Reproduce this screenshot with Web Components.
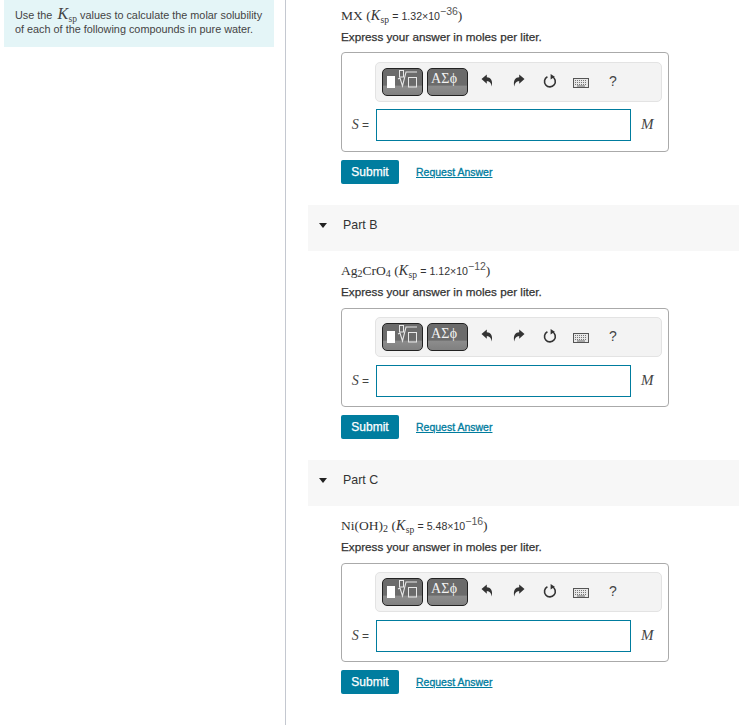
<!DOCTYPE html>
<html>
<head>
<meta charset="utf-8">
<style>
  html, body { margin: 0; padding: 0; background: #fff; }
  body { font-family: "Liberation Sans", Arial, sans-serif; color: #333; }
</style>
</head>
<body>
<template id="ksp-tpl"><style>
    :host { display: inline; font-family: "Liberation Serif", serif; }
    i { font-size: var(--k-size, 16px); line-height: 0; margin-left: var(--k-gap, 0); }
    sub { font: 9.5px/0 "Liberation Serif", serif; vertical-align: -3px; margin-left: 0.5px; }
  </style><i>K</i><sub>sp</sub></template>

<quiz-page>
  <intro-panel slot="side">
    Use the <k-sp style="--k-gap: 2px"></k-sp> values to calculate the molar solubility<br>of each of the following compounds in pure water.
  </intro-panel>

  <quiz-part formula="MX" ksp="1.32" exp="36"></quiz-part>
  <quiz-part title="Part B" formula="Ag<sub>2</sub>CrO<sub>4</sub>" ksp="1.12" exp="12"></quiz-part>
  <quiz-part title="Part C" formula="Ni(OH)<sub>2</sub>" ksp="5.48" exp="16"></quiz-part>
</quiz-page>

<script>
class KSp extends HTMLElement {
  constructor() {
    super();
    this.attachShadow({ mode: "open" });
    this.shadowRoot.appendChild(document.getElementById("ksp-tpl").content.cloneNode(true));
  }
}

class QuizPage extends HTMLElement {
  constructor() {
    super();
    this.attachShadow({ mode: "open" });
    this.shadowRoot.innerHTML = `
      <style>
        :host { display: grid; grid-template-columns: 286px 1fr; height: 725px; overflow: hidden; }
        .side { border-right: 1px solid #c4c8d0; padding-left: 4px; padding-right: 11px; }
        .main { padding-left: 22px; }
      </style>
      <div class="side"><slot name="side"></slot></div>
      <div class="main"><slot></slot></div>
    `;
  }
}

class IntroPanel extends HTMLElement {
  constructor() {
    super();
    this.attachShadow({ mode: "open" });
    this.shadowRoot.innerHTML = `
      <style>
        :host {
          display: block;
          background: #e4f5f7;
          height: 47px;
          box-sizing: border-box;
          padding: 8px 5px 0 11px;
          font: 10.85px/14px "Liberation Sans", Arial, sans-serif;
          color: #444;
        }
      </style>
      <slot></slot>
    `;
  }
}

class MathToolbar extends HTMLElement {
  constructor() {
    super();
    this.attachShadow({ mode: "open" });
    this.shadowRoot.innerHTML = `
      <style>
        :host {
          display: flex;
          align-items: center;
          box-sizing: border-box;
          width: 287px;
          height: 40px;
          margin-left: 33px;
          padding-left: 6px;
          background: #f3f3f3;
          border: 1px solid #e3e3e3;
          border-radius: 5px;
        }
        .tpl {
          box-sizing: border-box;
          width: 41px;
          height: 28px;
          margin-right: 4px;
          border: 1px solid #222;
          border-radius: 5px;
          background: linear-gradient(#6b6b6b 0, #6b6b6b 62%, #8c8c8c 66%, #808080 100%);
          color: #fff;
          display: flex;
          align-items: center;
        }
        .greek { font: 14px/1 "Liberation Serif", serif; letter-spacing: 0.2px; padding: 0 0 7px 3px; color: #f2f2f2; }
        .icons { display: flex; align-items: center; padding-bottom: 3px; }
        .icons span { display: flex; justify-content: center; align-items: center; height: 20px; }
        .q { font: 14px/1 "Liberation Sans", Arial, sans-serif; color: #444; }
      </style>
      <div class="tpl">
        <svg width="39" height="26" viewBox="0 0 39 26">
          <rect x="4" y="7" width="8" height="12" fill="#fff"/>
          <rect x="16.5" y="1.5" width="4" height="6.5" fill="none" stroke="#e8e8e8"/>
          <path d="M15 10l2 -1 2.5 8 3.5 -14h11" fill="none" stroke="#e8e8e8" stroke-width="1.1"/>
          <rect x="25.5" y="8.5" width="8" height="9.5" fill="none" stroke="#e8e8e8"/>
        </svg>
      </div>
      <div class="tpl greek">ΑΣϕ</div>
      <div class="icons">
        <span style="width:12px;margin-left:9px">
          <svg width="12" height="13" viewBox="0 0 12 13"><path d="M0.5 5L5.8 0.5V3.3C9.4 3.3 12 6 10.8 12.5C10 9 8.7 7.2 5.8 7.1V9.8Z" fill="#333"/></svg>
        </span>
        <span style="width:12px;margin-left:20px">
          <svg width="12" height="13" viewBox="0 0 12 13"><path d="M11.5 5L6.2 0.5V3.3C2.6 3.3 0 6 1.2 12.5C2 9 3.3 7.2 6.2 7.1V9.8Z" fill="#333"/></svg>
        </span>
        <span style="width:14px;margin-left:18px">
          <svg width="14" height="14" viewBox="0 0 14 14"><path d="M9.2 2.6A5.4 5.4 0 1 1 4.4 2.7" fill="none" stroke="#333" stroke-width="1.6"/><path d="M7.6 0L7.6 5.6L11.8 2.8Z" fill="#333"/></svg>
        </span>
        <span style="width:16px;margin-left:16px;padding-top:5px">
          <svg width="16" height="10" viewBox="0 0 16 10">
            <rect x="0.5" y="0.5" width="15" height="9" fill="#e8e8e8" stroke="#555"/>
            <path d="M2 2.5h12M2 4.5h12" stroke="#777" stroke-dasharray="1 1"/>
            <path d="M2 6.5h12" stroke="#777" stroke-dasharray="1 1"/>
            <path d="M4 8h8" stroke="#666"/>
          </svg>
        </span>
        <span class="q" style="width:10px;margin-left:19px">?</span>
      </div>
    `;
  }
}

class AnswerBox extends HTMLElement {
  constructor() {
    super();
    this.attachShadow({ mode: "open" });
    this.shadowRoot.innerHTML = `
      <style>
        :host {
          display: block;
          box-sizing: border-box;
          width: 328px;
          height: 100px;
          padding-top: 9px;
          border: 1px solid #aaa;
          border-radius: 4px;
          background: #fff;
          --gap: 7px;
        }
        :host([compact]) { height: 99px; padding-top: 8px; --gap: 8px; }
        .row { display: flex; align-items: center; margin-top: var(--gap); }
        .s { width: 34px; text-align: right; font: 12px "Liberation Sans", Arial, sans-serif; color: #444; white-space: nowrap; box-sizing: border-box; padding-right: 7px; }
        .s i { font: italic 14px "Liberation Serif", serif; }
        .field { box-sizing: border-box; width: 255px; height: 32px; border: 1.5px solid #007c9e; background: #fff; }
        .unit { margin-left: 10px; padding-bottom: 2px; font: italic 15px "Liberation Serif", serif; color: #444; }
      </style>
      <math-toolbar></math-toolbar>
      <div class="row">
        <span class="s"><i>S</i> =</span>
        <div class="field"></div>
        <span class="unit">M</span>
      </div>
    `;
  }
}

class QuizPart extends HTMLElement {
  constructor() {
    super();
    this.attachShadow({ mode: "open" });
  }

  connectedCallback() {
    const title = this.getAttribute("title");
    const formula = this.getAttribute("formula");
    const ksp = this.getAttribute("ksp");
    const exp = this.getAttribute("exp");
    this.shadowRoot.innerHTML = `
      <style>
        :host { display: block; }
        .head {
          display: flex;
          align-items: center;
          box-sizing: border-box;
          height: 46px;
          padding-bottom: 6px;
          background: #f7f7f7;
          font: 12.4px "Liberation Sans", Arial, sans-serif;
          color: #333;
        }
        .arrow { width: 0; height: 0; margin: 0 16px 0 11px; border: 4.5px solid transparent; border-top: 5px solid #222; border-bottom: 0; }
        .body { padding: 8px 0 21px 33px; }
        :host([title]) .body { padding-top: 12px; }
        .formula { height: 15px; font: 13.5px/15px "Liberation Serif", serif; color: #333; white-space: nowrap; }
        .formula sub { font-size: 10px; line-height: 0; vertical-align: -2px; }
        .num { font: 10.6px "Liberation Sans", Arial, sans-serif; }
        .num sup { font-size: 10.5px; line-height: 0; vertical-align: 5px; color: #555; }
        .hint { margin: 7px 0 8px; font: 11.7px/14px "Liberation Sans", Arial, sans-serif; -webkit-text-stroke: 0.25px #333; color: #333; }
        :host([title]) .hint { margin-bottom: 9px; }
        .actions { display: flex; align-items: center; margin-top: 8px; }
        .submit { box-sizing: border-box; width: 58px; height: 24px; background: #007d9f; color: #fff; border-radius: 2px; text-align: center; font: 12px/24px "Liberation Sans", Arial, sans-serif; -webkit-text-stroke: 0.25px #fff; }
        .req { margin-left: 17px; color: #007c9e; font: 10.5px "Liberation Sans", Arial, sans-serif; -webkit-text-stroke: 0.3px #007c9e; text-decoration: underline; }
        k-sp { --k-size: 14px; }
      </style>
      ${title ? `<div class="head"><span class="arrow"></span>${title}</div>` : ""}
      <div class="body">
        <div class="formula">${formula} (<k-sp></k-sp> <span class="num">= ${ksp}×10<sup>−${exp}</sup></span>)</div>
        <div class="hint">Express your answer in moles per liter.</div>
        <answer-box ${title ? "compact" : ""}></answer-box>
        <div class="actions">
          <div class="submit">Submit</div>
          <span class="req">Request Answer</span>
        </div>
      </div>
    `;
  }
}

customElements.define("k-sp", KSp);
customElements.define("math-toolbar", MathToolbar);
customElements.define("answer-box", AnswerBox);
customElements.define("intro-panel", IntroPanel);
customElements.define("quiz-part", QuizPart);
customElements.define("quiz-page", QuizPage);
</script>
</body>
</html>
